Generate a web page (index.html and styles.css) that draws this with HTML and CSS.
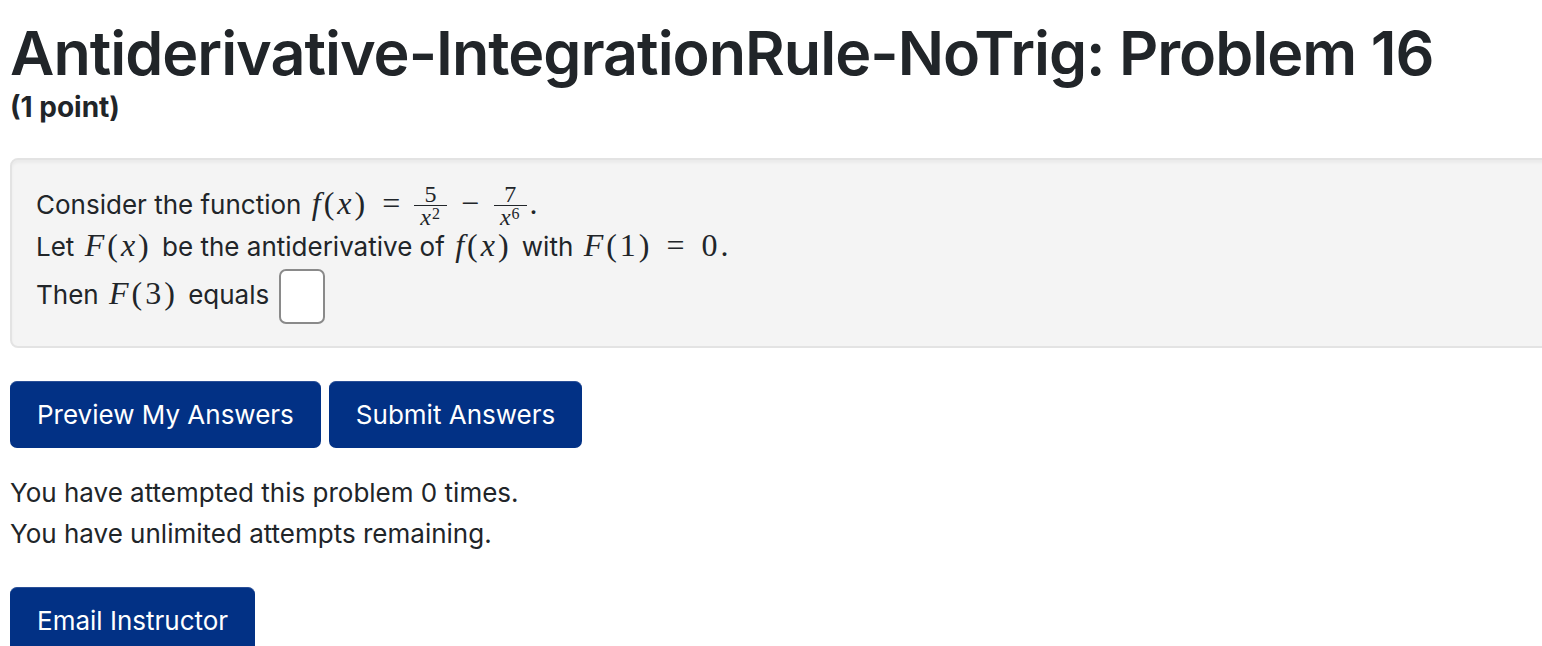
FILE: index.html
```html
<!DOCTYPE html>
<html lang="en">
<head>
    <meta charset="UTF-8">
    <title>Problem 16</title>
    <link rel="stylesheet" href="styles.css">
</head>
<body>
<div class="page">
    <h1 class="title">Antiderivative-IntegrationRule-NoTrig: Problem 16</h1>
    <p class="points">(1 point)</p>

    <div class="problem">
        <p class="line">Consider the function <span class="m"><i>f</i>(<i>x</i>)</span><span class="op">=</span><span class="frac"><span class="num">5</span><span class="den"><i>x</i><sup>2</sup></span></span><span class="op minus">&minus;</span><span class="frac"><span class="num">7</span><span class="den"><i>x</i><sup>6</sup></span></span><span class="m">.</span></p>
        <p class="line">Let <span class="m"><i>F</i>(<i>x</i>)</span> be the antiderivative of <span class="m"><i>f</i>(<i>x</i>)</span> with <span class="m"><i>F</i>(1)</span><span class="op">=</span><span class="m">0.</span></p>
        <p class="line last">Then <span class="m"><i>F</i>(3)</span> equals <input type="text" class="answer"></p>
    </div>

    <div class="buttons">
        <a href="javascript:;" class="btn">Preview My Answers</a>
        <a href="javascript:;" class="btn">Submit Answers</a>
    </div>

    <div class="attempts">
        <p>You have attempted this problem 0 times.</p>
        <p>You have unlimited attempts remaining.</p>
    </div>

    <a href="javascript:;" class="btn email">Email Instructor</a>
</div>
</body>
</html>
```

FILE: styles.css
```css
*{margin: 0;padding: 0;box-sizing: border-box;}
body{font-family: Inter, "Noto Sans", sans-serif;font-size: 26px;color: #212529;background: #fff;overflow: hidden;}
.page{padding-left: 10px;}
.title{font-size: 61px;font-weight: 600;line-height: 1;padding-top: 23px;letter-spacing: -1px;}
.points{font-size: 28px;font-weight: 700;line-height: 1;margin-top: 9px;}
.problem{margin-top: 37px;margin-right: -20px;background: #f4f4f4;border: 2px solid #e3e3e3;border-radius: 8px;box-shadow: inset 0 3px 3px rgba(0,0,0,.04);padding: 22px 24px 26px;}
.line{height: 42px;line-height: 42px;white-space: nowrap;}
.line.last{height: 54px;line-height: 54px;}
.m, .op{font-family: "Liberation Serif", "DejaVu Serif", serif;font-size: 32px;letter-spacing: 3px;}
.m{margin: 0 3px;}
.op{margin: 0 11px;}
.op.minus{margin: 0 12px 0 14px;}
.frac{display: inline-flex;flex-direction: column;align-items: center;vertical-align: 12px;font-family: "Liberation Serif", "DejaVu Serif", serif;font-size: 24px;line-height: 19px;}
.frac .num{padding-bottom: 1px;border-bottom: 1px solid #212529;width: 100%;text-align: center;}
.frac .den{padding: 3px 7px 0 6px;line-height: 17px;}
.frac sup{font-size: 16px;vertical-align: 6px;line-height: 0;margin-left: 1px;}
.answer{width: 46px;height: 55px;border: 2px solid #8a8a8a;border-radius: 7px;background: #fff;vertical-align: middle;margin-left: 2px;}
.buttons{display: flex;gap: 8px;margin-top: 33px;}
.btn{display: inline-block;background: #023185;color: #fff;text-decoration: none;font-size: 26px;line-height: 66px;padding: 0 27px;border-radius: 7px;border-top: 1px solid #2a4f97;}
.attempts{margin-top: 24px;line-height: 41px;}
.email{margin-top: 33px;}
```
